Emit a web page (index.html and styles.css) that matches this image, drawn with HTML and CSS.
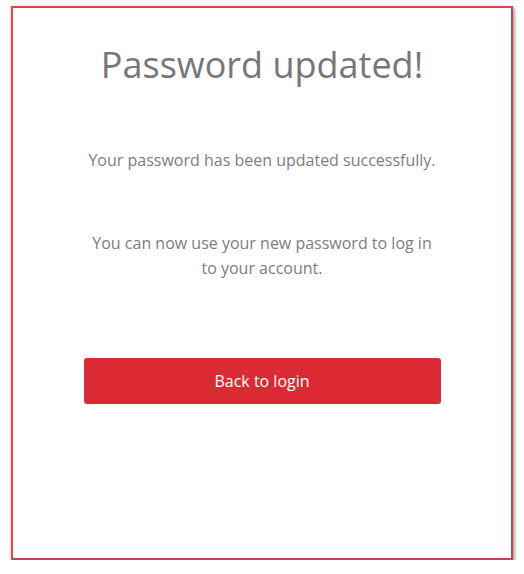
FILE: index.html
```html
<!DOCTYPE html>
<html>
<head>
<meta charset="utf-8">
<link rel="stylesheet" href="styles.css">
</head>
<body>
<div class="card">
  <h1 class="title">Password updated!</h1>
  <p class="msg first">Your password has been updated successfully.</p>
  <p class="msg second">You can now use your new password to log in<br>to your account.</p>
  <button class="btn">Back to login</button>
</div>
</body>
</html>
```
FILE: styles.css
```css
html, body {
  margin: 0;
  padding: 0;
  background: #ffffff;
}
body {
  font-family: "Open Sans", "Liberation Sans", sans-serif;
  padding: 6px 0 0 11px;
}
.card {
  box-sizing: border-box;
  width: 502px;
  height: 554px;
  border: 2px solid #e2434f;
  border-right-color: #bf4650;
  border-bottom-color: #bf4650;
  box-shadow: 2px 2px 3px rgba(0,0,0,0.35), -1px 0 2px rgba(0,0,0,0.12);
  display: flex;
  flex-direction: column;
  align-items: center;
  background: #fff;
}
.title {
  margin: 31px 0 0 0;
  font-size: 36px;
  font-weight: 400;
  color: #777777;
  line-height: 52px;
}
.msg {
  margin: 0;
  font-size: 16px;
  line-height: 25px;
  color: #7d7d7d;
  text-align: center;
}
.first {
  margin-top: 57px;
}
.second {
  margin-top: 58px;
}
.btn {
  margin-top: 77px;
  width: 357px;
  height: 46px;
  border: none;
  border-radius: 3px;
  background: #dc2a35;
  color: #ffffff;
  font-family: "Open Sans", "Liberation Sans", sans-serif;
  font-size: 16px;
}
```
